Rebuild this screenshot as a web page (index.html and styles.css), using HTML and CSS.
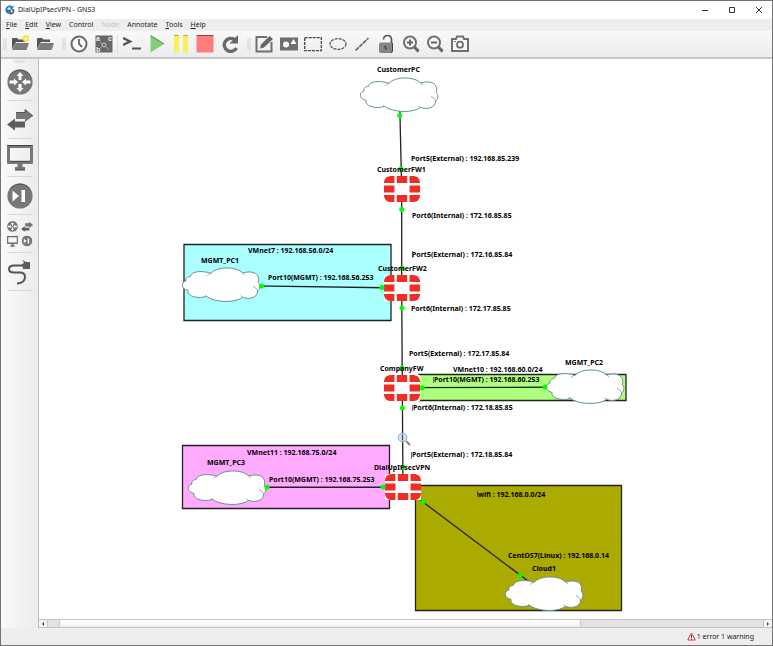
FILE: index.html
```html
<!DOCTYPE html>
<html lang="en">
<head>
<meta charset="utf-8">
<title>DialUpIPsecVPN - GNS3</title>
<link rel="stylesheet" href="styles.css">
</head>
<body>
<svg class="defs" aria-hidden="true">
  <symbol id="router" viewBox="0 0 26 26">
    <circle cx="13" cy="13" r="12.6" fill="#777"/>
    <path d="M3 6A12.5 12.5 0 0 1 23 6" fill="none" stroke="#444" stroke-width=".8"/>
    <g fill="#fff"><path d="M13 3l3.500 4h-2v4h-3V7h-2z"/><path d="M13 23l3.500-4h-2v-4h-3v4h-2z"/><path d="M11 13L7 9.500v2H2.500v3H7v2z"/><path d="M15 13l4-3.500v2h4.500v3H19v2z"/></g>
  </symbol>
  <symbol id="switch" viewBox="0 0 26 22">
    <path d="M9 3.500h9V.5l8 6.500-8 6V10H9z" fill="#777"/>
    <path d="M18 12.500H8v-3L0 15.500l8 6v-3h10z" fill="#5c5c5c"/>
    <path d="M9 3.500h9V.5l8 6.500" fill="none" stroke="#3c3c3c" stroke-width=".8"/>
  </symbol>
  <symbol id="monitor" viewBox="0 0 26 26">
    <path d="M1 0h24q1 0 1 1v17q0 1-1 1H15.500v3H18v3H8v-3h2.500v-3H1q-1 0-1-1V1q0-1 1-1zM3 3v13h20V3z" fill="#777" fill-rule="evenodd"/>
    <path d="M.5.500h25M3 16.300h20M8 25h10" stroke="#444"/>
  </symbol>
  <symbol id="security" viewBox="0 0 26 26">
    <circle cx="13" cy="13" r="12.600" fill="#777"/>
    <path d="M3 6A12.500 12.500 0 0 1 23 6" fill="none" stroke="#444" stroke-width=".8"/>
    <path d="M5.500 7.500L12 13l-6.500 5.500zM14.500 7h3.500v12h-3.500z" fill="#fff"/>
  </symbol>
  <symbol id="folder" viewBox="0 0 18 18">
    <path d="M1 14V4q0-1 1-1h4l1.500 1.500H14V7H5z" fill="#555"/>
    <path d="M4.500 8H18l-2.500 7H1z" fill="#7b7b7b"/>
  </symbol>
  <symbol id="cloud" viewBox="0 0 240 108">
    <path d="M25 28C28 12 62 10 87 19C105-3 165-2 182 18C215 8 236 22 229 47C236 53 235 67 227 72C227 94 198 98 182 91C160 109 98 107 73 88C52 96 14 90 18 70C-4 66-3 45 12 42C9 34 17 29 25 28Z" fill="#fff" stroke="#6b8f99" stroke-width="3"/>
    <path d="M87 19q-9 3-12 7M73 88l-3-4M182 91l-7-5M227 72q-2-9-14-14M182 18l7 6" fill="none" stroke="#6b8f99" stroke-width="2"/>
  </symbol>
  <symbol id="firewall" viewBox="0 0 107 77">
    <path fill="#fff" d="M0 0h107v77H0z"/>
    <path fill="#ee2e24" d="M18 0H31V21H0V18Q2 2 18 0M38 0h31v21H38zM76 0H89Q105 2 107 18V21H76zM0 28h31v21H0zM76 28h31v21H76zM0 56H31V77H18Q2 75 0 59zM38 56h31v21H38zM76 56h31v3Q105 75 89 77H76z"/>
  </symbol>
</svg>
<div class="window">
  <header class="titlebar">
    <svg class="logo" viewBox="0 0 10 10"><path d="M6 .5C2 0 0 3 .5 6q1 3 4 3.500Q3 7 4 5l3-1 1.500-2z" fill="#2378b8"/><path d="M5 9.500q4 0 4.500-4L8 3.500 6 5 4 5q-1 2 1 4.500" fill="#3c5876"/><path d="M2 4l2-2 2 1-2 2zM5 6l2-1 1 1-1 2z" fill="#d9efff"/><path d="M7.500.5l2 .5-.5 2-2-1z" fill="#9ab9cc"/></svg>
    <h1>DialUpIPsecVPN - GNS3</h1>
    <div class="controls">
      <button aria-label="Minimize"><svg viewBox="0 0 8 8"><path d="M1 4.500h6"/></svg></button>
      <button aria-label="Maximize"><svg viewBox="0 0 8 8"><path d="M1.500 1.500h5v5h-5z"/></svg></button>
      <button aria-label="Close"><svg viewBox="0 0 8 8"><path d="M1 1l6 6M7 1L1 7"/></svg></button>
    </div>
  </header>
  <nav class="menu">
    <button><u>F</u>ile</button><button><u>E</u>dit</button><button><u>V</u>iew</button><button>Control</button><button disabled>Node</button><button>Annotate</button><button><u>T</u>ools</button><button><u>H</u>elp</button>
  </nav>
  <div class="toolbar">
    <span class="grip"></span>
    <div class="tools two">
      <button aria-label="New project"><svg viewBox="0 0 18 18"><use href="#folder"/><circle cx="15" cy="3.500" r="3.300" fill="#f2e63b"/><circle cx="15" cy="3.500" r="1.500" fill="#fff79a"/></svg></button>
      <button aria-label="Open project"><svg viewBox="0 0 18 18"><use href="#folder"/></svg></button>
    </div>
    <span class="grip"></span>
    <div class="tools two">
      <button aria-label="Snapshots"><svg viewBox="0 0 18 18"><circle cx="9" cy="9" r="7.500" fill="#fff" stroke="#6b6b6b" stroke-width="2"/><path d="M9 4v5l3 3" fill="none" stroke="#666" stroke-width="1.800"/></svg></button>
      <button aria-label="Interface labels"><svg viewBox="0 0 18 18"><path d="M.5.500h17v17H.5z" fill="#666"/><path d="M5.500 7l9 8M5.500 13l6-5" stroke="#aaa"/><circle cx="9" cy="10" r="2" fill="#666" stroke="#ccc"/><g class="abc"><text x="1" y="6">a</text><text x="13" y="6">c</text><text x="1" y="17">b</text></g></svg></button>
    </div>
    <span class="rule"></span>
    <div class="tools five">
      <button aria-label="Console"><svg viewBox="0 0 18 18"><path d="M0 3l7 3.500L0 10" fill="none" stroke="#555" stroke-width="2.400"/><path d="M9 13.500h9" stroke="#555" stroke-width="2"/></svg></button>
      <button aria-label="Start"><svg viewBox="0 0 18 18"><path d="M2.500.5L16 9 2.500 17.500z" fill="#80cf7c"/><path d="M2.500.500L16 9" stroke="#557a53"/></svg></button>
      <button aria-label="Suspend"><svg viewBox="0 0 18 18"><path d="M2 .5h5v17H2zM11 .5h5v17h-5z" fill="#f9ef5a"/><path d="M2 .500h5m4 0h5" stroke="#b5ac4b"/></svg></button>
      <button aria-label="Stop"><svg viewBox="0 0 18 18"><path d="M.5.500h17v17H.5z" fill="#ff7c7c"/><path d="M.5.500h17" stroke="#944"/></svg></button>
      <button aria-label="Reload"><svg viewBox="0 0 18 18"><path d="M13.500 4.500A6.500 6.500 0 1 0 15.500 13" fill="none" stroke="#6a6a6a" stroke-width="3.400"/><path d="M17 0v8.500H8.500z" fill="#666"/></svg></button>
    </div>
    <span class="grip"></span>
    <div class="tools nine">
      <button aria-label="Add note"><svg viewBox="0 0 18 18"><path d="M12 2H1.500v14.500h15V7" fill="none" stroke="#707070" stroke-width="2"/><path d="M5 13.500l1-4L14.500 1 18 4 9 12.500z" fill="#666"/></svg></button>
      <button aria-label="Insert picture"><svg viewBox="0 0 18 18"><path d="M0 2.500h18v13H0z" fill="#6f6f6f"/><circle cx="6" cy="9.500" r="3" fill="#fff"/><path d="M10.500 9L13.500 4l3 5z" fill="#fff"/></svg></button>
      <button aria-label="Draw rectangle"><svg viewBox="0 0 18 18"><path d="M.7 2.700h16.600v13H.7z" fill="none" stroke="#444" stroke-width="1.300" stroke-dasharray="3 1"/></svg></button>
      <button aria-label="Draw ellipse"><svg viewBox="0 0 18 18"><ellipse cx="9" cy="9" rx="8" ry="5.300" fill="none" stroke="#555" stroke-width="1.300" stroke-dasharray="3 1"/></svg></button>
      <button aria-label="Draw line"><svg viewBox="0 0 18 18"><path d="M2.500 15.500L15.500 3" stroke="#666" stroke-width="1.700" stroke-dasharray="4.500 .7"/></svg></button>
      <button aria-label="Lock items"><svg viewBox="0 0 18 18"><path d="M6.500 4.500V4q.5-3.500 4-3.500T14.500 4v5" fill="none" stroke="#555" stroke-width="1.700"/><rect x="2" y="7.500" width="14" height="10.500" rx="2" fill="#858585"/><path d="M15.500 8v8.500l-2 1" fill="none" stroke="#444"/><path d="M8 11l1 3.500" stroke="#333" stroke-width="1.300"/></svg></button>
      <button aria-label="Zoom in"><svg viewBox="0 0 18 18"><circle cx="8" cy="7.500" r="6" fill="#f5f5f5" stroke="#707070" stroke-width="2"/><path d="M12.500 12l4 4.500" stroke="#666" stroke-width="3"/><path d="M8 4.500v6M5 7.500h6" stroke="#666" stroke-width="2"/></svg></button>
      <button aria-label="Zoom out"><svg viewBox="0 0 18 18"><circle cx="8" cy="7.500" r="6" fill="#f5f5f5" stroke="#707070" stroke-width="2"/><path d="M12.500 12l4 4.500" stroke="#666" stroke-width="3"/><path d="M5 7.500h6" stroke="#666" stroke-width="2"/></svg></button>
      <button aria-label="Screenshot"><svg viewBox="0 0 18 18"><path d="M1 4h4l1-2.500h6L13 4h4v12H1z" fill="#f8f8f8" stroke="#707070" stroke-width="2"/><circle cx="9" cy="9.700" r="3" fill="none" stroke="#707070" stroke-width="1.800"/><path d="M3 6.500h2" stroke="#777"/></svg></button>
    </div>
  </div>
  <div class="workspace">
    <aside class="devices">
      <span class="grip flat"></span>
      <button aria-label="Routers"><svg><use href="#router"/></svg></button>
      <button aria-label="Switches"><svg><use href="#switch"/></svg></button>
      <button aria-label="End devices"><svg><use href="#monitor"/></svg></button>
      <button aria-label="Security devices"><svg><use href="#security"/></svg></button>
      <button aria-label="All devices"><svg viewBox="0 0 26 26"><use href="#router" width="11" height="11"/><use href="#switch" x="14" y="1" width="12" height="10"/><use href="#monitor" y="15" width="11" height="11"/><use href="#security" x="14.500" y="14.500" width="11" height="11"/></svg></button>
      <button aria-label="Add a link"><svg viewBox="0 0 26 26"><path d="M17 6.500H7q-5 0-5 3.500t5 3.500h6q5 0 5 4.500 0 6-8 6.500" fill="none" stroke="#555" stroke-width="2"/><path d="M15 5l2-1-1.500-3L19 3h4v7h-7z" fill="#5c5c5c"/></svg></button>
    </aside>
    <main class="view">
      <svg class="scene" role="img" aria-label="Network topology">
        <g transform="translate(-39 -59)">
          <g stroke="#222" stroke-width="1.300">
            <path d="M184 244.500h207v76H184z" fill="#aff"/>
            <path d="M419 374.500h207v26H419z" fill="#afff7f"/>
            <path d="M182.500 445.500h207v63h-207z" fill="#faf"/>
            <path d="M415.500 485.500h206v125h-206z" fill="#aa0"/>
          </g>
          <path d="M399.500 95L401.700 189V288L402.300 387L403 487M222 285.500L402 288M402 387.700L585 387M228 487.300L403 487L544 593" fill="none" stroke="#222" stroke-width="1.300"/>
          <use href="#cloud" x="360" y="77" width="80" height="36"/>
          <use href="#cloud" x="182" y="267" width="80" height="36"/>
          <use href="#cloud" x="546" y="369" width="80" height="36"/>
          <use href="#cloud" x="188" y="470" width="80" height="36"/>
          <use href="#cloud" x="505" y="576" width="80" height="36"/>
          <use href="#firewall" x="384" y="176" width="36" height="26"/>
          <use href="#firewall" x="384" y="275" width="36" height="26"/>
          <use href="#firewall" x="384" y="375" width="36" height="26"/>
          <use href="#firewall" x="385" y="474" width="36" height="26"/>
          <g fill="#0f0">
            <circle cx="399.700" cy="115.500" r="2.500"/><circle cx="401" cy="169" r="2.500"/><circle cx="401.700" cy="209.500" r="2.500"/><circle cx="402" cy="268" r="2.500"/><circle cx="402" cy="308" r="2.500"/><circle cx="402" cy="368" r="2.500"/><circle cx="402.300" cy="408" r="2.500"/><circle cx="403" cy="467" r="2.500"/>
            <circle cx="261.500" cy="286" r="2.500"/><circle cx="382" cy="287.500" r="2.500"/><circle cx="422.300" cy="387.700" r="2.500"/><circle cx="545" cy="387" r="2.500"/><circle cx="267" cy="487.300" r="2.500"/><circle cx="383" cy="487" r="2.500"/><circle cx="423" cy="502" r="2.500"/><circle cx="520" cy="575.500" r="2.500"/>
          </g>
          <path d="M406 441l4 4" stroke="#888" stroke-width="2"/><circle cx="402.500" cy="437.500" r="4.300" fill="#d4e4f5" stroke="#9aa7b5"/><path d="M402.500 434.500v6" stroke="#456" stroke-width="1.300"/>
          <path d="M412.500 251v7M433.500 377v6M412.500 405v6M411.500 452v7" stroke="#777"/><path d="M477.500 491v6" stroke="#34b"/>
          <g class="labels">
            <text x="377" y="72">CustomerPC</text>
            <text x="411" y="161">Port5(External) : 192.168.85.239</text>
            <text x="377" y="172">CustomerFW1</text>
            <text x="412" y="218">Port6(Internal) : 172.16.85.85</text>
            <text x="412" y="257">Port5(External) : 172.16.85.84</text>
            <text x="248" y="253">VMnet7 : 192.168.56.0/24</text>
            <text x="201" y="263">MGMT_PC1</text>
            <text x="378" y="271">CustomerFW2</text>
            <text x="268" y="280">Port10(MGMT) : 192.168.56.253</text>
            <text x="411" y="311">Port6(Internal) : 172.17.85.85</text>
            <text x="409" y="356">Port5(External) : 172.17.85.84</text>
            <text x="380" y="371">CompanyFW</text>
            <text x="453" y="372">VMnet10 : 192.168.60.0/24</text>
            <text x="565" y="365">MGMT_PC2</text>
            <text x="434" y="382">Port10(MGMT) : 192.168.60.253</text>
            <text x="413" y="410">Port6(Internal) : 172.18.85.85</text>
            <text x="412" y="457">Port5(External) : 172.18.85.84</text>
            <text x="374" y="470">DialUpIPsecVPN</text>
            <text x="247" y="455">VMnet11 : 192.168.75.0/24</text>
            <text x="207" y="465">MGMT_PC3</text>
            <text x="269" y="482">Port10(MGMT) : 192.168.75.253</text>
            <text x="478" y="497">wifi : 192.168.0.0/24</text>
            <text x="508" y="558">CentOS7(Linux) : 192.168.0.14</text>
            <text x="532" y="571">Cloud1</text>
          </g>
        </g>
      </svg>
      <div class="scrollbar">
        <button aria-label="Scroll left"><svg viewBox="0 0 8 8"><path d="M5 2v4L3 4z"/></svg></button>
        <span class="track"><span class="thumb"></span></span>
        <button aria-label="Scroll right"><svg viewBox="0 0 8 8"><path d="M3 2v4l2-2z"/></svg></button>
      </div>
    </main>
  </div>
  <footer class="status">
    <svg viewBox="0 0 9 9"><path d="M4.500 1L8.300 8H.7z" fill="#fff" stroke="#d33"/><path d="M4.500 3v3m0 .6v1" stroke="#a22"/></svg>
    <span>1 error 1 warning</span>
  </footer>
</div>
</body>
</html>
```
FILE: styles.css
```css
* { box-sizing: border-box; }
body { margin: 0; font: 7px/10px "Noto Sans", sans-serif; color: #222; }
button { border: 0; padding: 0; margin: 0; background: none; font: inherit; color: inherit; }
svg { display: block; }
.defs { position: absolute; width: 0; height: 0; }
.window { display: flex; flex-direction: column; height: 100vh; border: 1px solid #747474; background: #eee; overflow: hidden; }
.titlebar { flex: none; height: 18px; display: flex; align-items: center; background: #fff; padding-left: 4px; }
.logo { width: 10px; height: 10px; margin-right: 3px; }
h1 { margin: 0; font-size: 7px; font-weight: 400; }
.controls { display: flex; margin-left: auto; }
.controls button { width: 27px; display: flex; justify-content: center; }
.controls svg { width: 8px; height: 8px; fill: none; stroke: #333; }
.menu { flex: none; height: 12px; display: flex; align-items: center; gap: 8px; padding-left: 5px; }
.menu button:disabled { color: #c4c4c4; }
.toolbar { flex: none; height: 28px; display: flex; align-items: center; padding-left: 2px; background: linear-gradient(#f9f9f9, #ececec); border-bottom: 2px solid #c6c6c6; }
.grip { width: 4px; height: 12px; margin-right: 1px; background: radial-gradient(circle, #ccc 1px, transparent 1px) 0 0 / 2px 2px; opacity: .4; }
.grip.flat { flex: none; width: 11px; height: 3px; margin: 1px 0 0; }
.tools { display: flex; }
.tools button { flex: 1; display: flex; justify-content: center; }
.tools svg { width: 18px; height: 18px; }
.two { width: 49px; }
.five { width: 122px; }
.nine { width: 220px; }
.tools + .grip { margin-left: 5px; }
.rule { width: 1px; height: 18px; margin: 0 2px 0 1px; background: #ddd; }
.abc { font: bold 7px "Liberation Sans", sans-serif; fill: #eee; }
.workspace { flex: 1; min-height: 0; display: flex; }
.devices { flex: none; width: 38px; display: flex; flex-direction: column; align-items: center; background: linear-gradient(90deg, #fafafa, #ececec); border-right: 1px solid #bbb; }
.devices button { flex: none; width: 26px; height: 38px; display: flex; align-items: center; border-bottom: 1px solid #d8d8d8; }
.devices svg { width: 26px; height: 26px; }
.view { flex: 1; min-width: 0; display: flex; flex-direction: column; background: #fff; }
.scene { flex: 1; min-height: 0; width: 100%; }
.labels { font: bold 7px "Noto Sans", sans-serif; fill: #000; }
.scrollbar { flex: none; height: 9px; display: flex; border: 1px solid #c4c4c4; border-width: 1px 0; background: #f4f4f4; }
.scrollbar button { width: 8px; display: flex; align-items: center; }
.scrollbar svg { width: 8px; height: 8px; fill: #444; }
.track { flex: 1; display: flex; background: #e2e2e2; border: 1px solid #c4c4c4; border-width: 0 1px; }
.thumb { width: 73%; margin-left: 11px; background: linear-gradient(#fff, #f0f0f0); border: 1px solid #c4c4c4; border-width: 0 1px; }
.status { flex: none; height: 17px; display: flex; align-items: center; justify-content: flex-end; gap: 1px; padding-right: 18px; }
.status svg { width: 9px; height: 9px; }
```
